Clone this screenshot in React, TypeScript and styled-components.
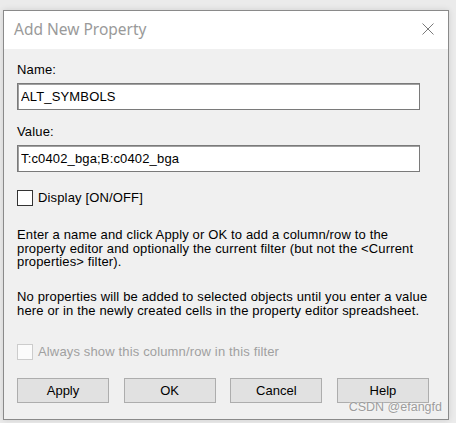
import styled, { createGlobalStyle } from "styled-components";

const GlobalStyle = createGlobalStyle`
  html, body {
    margin: 0;
    padding: 0;
    background: #ebebeb;
  }
  body {
    font-family: "Liberation Sans", Arial, sans-serif;
  }
`;

const Screen = styled.div`
  width: 456px;
  height: 423px;
  padding: 10px 0 0 3px;
  box-sizing: border-box;
  position: relative;
  overflow: hidden;
`;

const Window = styled.div`
  width: 446px;
  height: 410px;
  box-sizing: border-box;
  border: 1px solid #8a8a8a;
  background: #f0f0f0;
  box-shadow: 0 0 6px rgba(0, 0, 0, 0.12);
  display: flex;
  flex-direction: column;
`;

const TitleBar = styled.div`
  height: 38px;
  background: #ffffff;
  display: flex;
  align-items: center;
  justify-content: space-between;
  padding: 0 14px 0 10px;
`;

const Title = styled.span`
  font-family: "Noto Sans", "Open Sans", sans-serif;
  font-size: 15.5px;
  color: #9a9a9a;
  padding-bottom: 2px;
`;

const CloseIcon = styled.svg`
  width: 12px;
  height: 12px;
  margin-bottom: 2px;
`;

const Body = styled.div`
  padding: 13px 13px 0 13px;
  display: flex;
  flex-direction: column;
  letter-spacing: 0.15px;
`;

const Label = styled.label`
  font-size: 13px;
  line-height: 15px;
  color: #000;
  margin-bottom: 6px;
`;

const TextBox = styled.input<{ $gap?: number }>`
  width: 403px;
  height: 27px;
  box-sizing: border-box;
  border: 1px solid #7a7a7a;
  box-shadow: inset 1px 1px 0 #a0a0a0;
  background: #fff;
  padding: 0 3px;
  font-family: "Liberation Sans", Arial, sans-serif;
  font-size: 13px;
  letter-spacing: 0.15px;
  color: #000;
  outline: none;
  margin-bottom: ${(p) => p.$gap ?? 0}px;
`;

const CheckRow = styled.div<{ $disabled?: boolean; $top: number }>`
  display: flex;
  align-items: center;
  gap: 5px;
  margin-top: ${(p) => p.$top}px;
  font-size: 13px;
  line-height: 16px;
  color: ${(p) => (p.$disabled ? "#a0a0a0" : "#000")};
`;

const Box = styled.span<{ $disabled?: boolean }>`
  width: 16px;
  height: 16px;
  box-sizing: border-box;
  border: 1px solid ${(p) => (p.$disabled ? "#cccccc" : "#333333")};
  background: ${(p) => (p.$disabled ? "#fbfbfb" : "#ffffff")};
`;

const Paragraph = styled.p<{ $top: number; $lh: number }>`
  margin: ${(p) => p.$top}px 0 0;
  font-size: 13px;
  line-height: ${(p) => p.$lh}px;
  color: #000;
  white-space: nowrap;
`;

const Buttons = styled.div`
  width: 412px;
  display: flex;
  justify-content: space-between;
  margin-top: 18px;
`;

const Button = styled.button`
  width: 92px;
  height: 25px;
  box-sizing: border-box;
  border: 1px solid #adadad;
  background: #e1e1e1;
  font-family: "Liberation Sans", Arial, sans-serif;
  font-size: 13px;
  color: #000;
  padding: 0;
`;

const Watermark = styled.span`
  position: absolute;
  right: 14px;
  top: 400px;
  font-family: "Liberation Sans", Arial, sans-serif;
  font-size: 12.5px;
  color: #9c9c9c;
  text-shadow: 0 0 2px #fff;
`;

export default function App() {
  return (
    <>
      <GlobalStyle />
      <Screen>
        <Window>
          <TitleBar>
            <Title>Add New Property</Title>
            <CloseIcon viewBox="0 0 12 12">
              <path d="M0.5 0.5 L11.5 11.5 M11.5 0.5 L0.5 11.5" stroke="#7a7a7a" strokeWidth="1" fill="none" />
            </CloseIcon>
          </TitleBar>
          <Body>
            <Label>Name:</Label>
            <TextBox defaultValue="ALT_SYMBOLS" $gap={14} />
            <Label>Value:</Label>
            <TextBox defaultValue="T:c0402_bga;B:c0402_bga" />
            <CheckRow $top={18}>
              <Box />
              <span>Display [ON/OFF]</span>
            </CheckRow>
            <Paragraph $top={22} $lh={13.5}>
              Enter a name and click Apply or OK to add a column/row to the
              <br />
              property editor and optionally the current filter (but not the &lt;Current
              <br />
              properties&gt; filter).
            </Paragraph>
            <Paragraph $top={21} $lh={14}>
              No properties will be added to selected objects until you enter a value
              <br />
              here or in the newly created cells in the property editor spreadsheet.
            </Paragraph>
            <CheckRow $top={26} $disabled>
              <Box $disabled />
              <span>Always show this column/row in this filter</span>
            </CheckRow>
            <Buttons>
              <Button>Apply</Button>
              <Button>OK</Button>
              <Button>Cancel</Button>
              <Button>Help</Button>
            </Buttons>
          </Body>
        </Window>
        <Watermark>CSDN @efangfd</Watermark>
      </Screen>
    </>
  );
}
